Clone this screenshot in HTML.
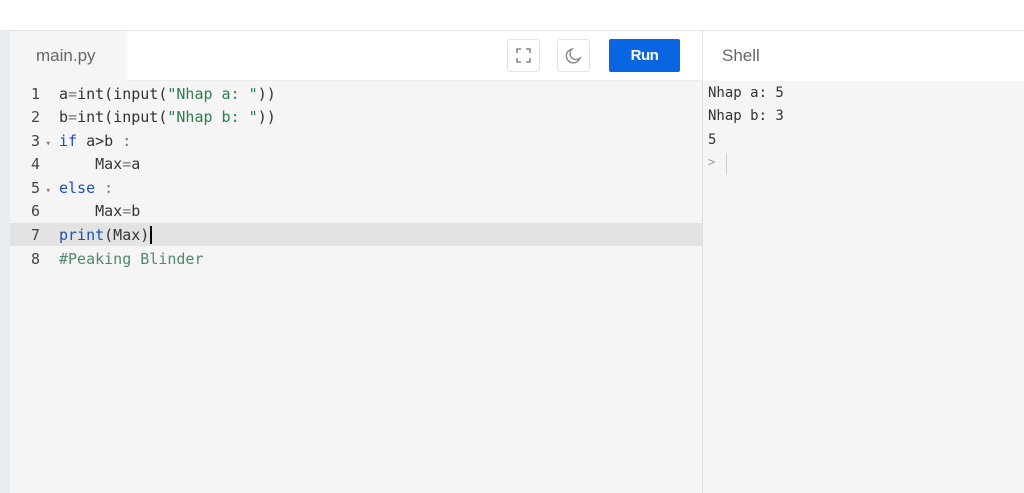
<!DOCTYPE html>
<html><head><style>
*{margin:0;padding:0;box-sizing:border-box}
body{width:1024px;height:493px;background:#fff;position:relative;overflow:hidden;font-family:"Liberation Sans",sans-serif}
.abs{position:absolute}
.code{font-family:"DejaVu Sans Mono",monospace;font-size:15px;color:#333;white-space:pre}
.ln{position:absolute;left:31px;color:#444}
.tx{position:absolute;left:59px}
.kw{color:#1f4fb8}
.st{color:#2e7d4f}
.cm{color:#4f8a6a}
.op{color:#777}
</style></head><body>
<div class="abs" style="left:0;top:30px;width:1024px;height:1px;background:#e6e6e6"></div>
<div class="abs" style="left:0;top:31px;width:10px;height:462px;background:#e9edf2"></div>
<div class="abs" style="left:10px;top:31px;width:117px;height:50px;background:#f5f5f5"></div>
<div class="abs" style="left:36px;top:46px;font-size:17px;color:#666">main.py</div>
<div class="abs" style="left:10px;top:81px;width:692px;height:412px;background:#f5f5f5"></div>
<div class="abs" style="left:127px;top:80px;width:575px;height:1px;background:#ececec"></div>
<div class="abs" style="left:702px;top:31px;width:1px;height:462px;background:#e0e0e0"></div>
<div class="abs" style="left:703px;top:81px;width:321px;height:412px;background:#f5f5f5"></div>
<div class="abs" style="left:722px;top:46px;font-size:17px;color:#666">Shell</div>
<div class="abs" style="left:507px;top:39px;width:33px;height:33px;border:1px solid #e2e2e2;border-radius:3px;background:#fff">
<svg width="31" height="31" viewBox="0 0 31 31"><path d="M9 13V9h4M18 9h4v4M22 18v4h-4M13 22H9v-4" fill="none" stroke="#888" stroke-width="1.6"/></svg></div>
<div class="abs" style="left:557px;top:39px;width:33px;height:33px;border:1px solid #e2e2e2;border-radius:3px;background:#fff">
<svg width="31" height="31" viewBox="0 0 31 31"><path d="M14 9a7 7 0 1 0 8 9a5.5 5.5 0 0 1-8-9z" fill="none" stroke="#888" stroke-width="1.4"/></svg></div>
<div class="abs" style="left:609px;top:39px;width:71px;height:33px;background:#0a66e0;border-radius:2px;color:#fff;font-weight:bold;font-size:15px;text-align:center;line-height:33px;letter-spacing:-0.5px">Run</div>
<div class="abs" style="left:10px;top:223px;width:692px;height:23px;background:#e3e3e3"></div>
<div class="code">
<div class="ln" style="top:85px">1</div><div class="tx" style="top:85px">a<span class="op">=</span>int(input(<span class="st">"Nhap a: "</span>))</div>
<div class="ln" style="top:108px">2</div><div class="tx" style="top:108px">b<span class="op">=</span>int(input(<span class="st">"Nhap b: "</span>))</div>
<div class="ln" style="top:132px">3<span style="font-size:9px;color:#777"> ▾</span></div><div class="tx" style="top:132px"><span class="kw">if</span> a&gt;b <span class="op">:</span></div>
<div class="ln" style="top:155px">4</div><div class="tx" style="top:155px">    Max<span class="op">=</span>a</div>
<div class="ln" style="top:179px">5<span style="font-size:9px;color:#777"> ▾</span></div><div class="tx" style="top:179px"><span class="kw">else</span> <span class="op">:</span></div>
<div class="ln" style="top:202px">6</div><div class="tx" style="top:202px">    Max<span class="op">=</span>b</div>
<div class="ln" style="top:226px">7</div><div class="tx" style="top:226px"><span class="kw">print</span>(Max)<span style="border-left:2px solid #000;margin-left:1px"></span></div>
<div class="ln" style="top:250px">8</div><div class="tx cm" style="top:250px">#Peaking Blinder</div>
<div class="abs" style="left:708px;top:85px;font-size:14px">Nhap a: 5</div>
<div class="abs" style="left:708px;top:108px;font-size:14px">Nhap b: 3</div>
<div class="abs" style="left:708px;top:132px;font-size:14px">5</div>
<div class="abs" style="left:708px;top:155px;font-size:12px;color:#999">&gt;</div>
</div>
<div class="abs" style="left:726px;top:153px;width:1px;height:22px;background:#ccc"></div>
</body></html>
